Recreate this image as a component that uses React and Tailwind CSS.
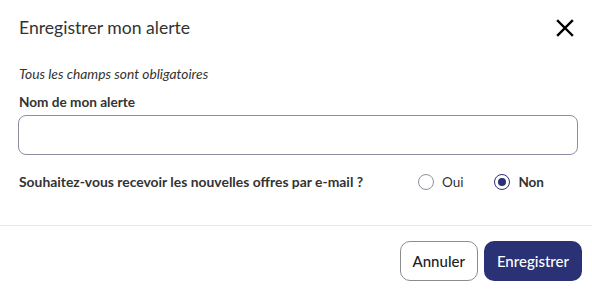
import React from 'react';

export default function App() {
  return (
    <div className="w-[592px] h-[292px] bg-white font-['Lato',sans-serif] text-[#333333] flex flex-col">
      {/* Header */}
      <div className="flex items-center justify-between pl-[19px] pr-[15px] pt-[7px] h-[49px]">
        <h2 className="text-[17.6px] leading-none">Enregistrer mon alerte</h2>
        <button className="w-[24px] h-[24px] flex items-center justify-center text-black">
          <svg width="18" height="18" viewBox="0 0 18 18" fill="none" stroke="currentColor" strokeWidth="2.4" strokeLinecap="square">
            <path d="M2 2 L16 16 M16 2 L2 16" />
          </svg>
        </button>
      </div>

      {/* Body */}
      <div className="pl-[18px] pr-[14px] flex flex-col">
        <p className="pl-px text-[13.8px] italic mt-[17px] leading-[16px]">Tous les champs sont obligatoires</p>
        <label className="pl-px text-[13.6px] font-bold mt-[12px] leading-[16px]">Nom de mon alerte</label>
        <input className="mt-[5px] h-[40px] w-full rounded-[8px] border border-[#8c8fa1] outline-none" />
        <div className="flex items-center mt-[19px] h-[16px]">
          <span className="pl-px text-[13.9px] font-bold flex-1">Souhaitez-vous recevoir les nouvelles offres par e-mail ?</span>
          <label className="flex items-center gap-[8px] text-[13.5px] mr-[31px]">
            <span className="w-[16px] h-[16px] rounded-full border border-[#8c8fa1]" />
            Oui
          </label>
          <label className="flex items-center gap-[8px] text-[13.5px] font-bold mr-[34px]">
            <span className="w-[16px] h-[16px] rounded-full border-[1.5px] border-[#2a3174] flex items-center justify-center">
              <span className="w-[8px] h-[8px] rounded-full bg-[#2a3174]" />
            </span>
            Non
          </label>
        </div>
      </div>

      <div className="mt-[35px] border-t border-[#e6e6e6]" />

      {/* Footer */}
      <div className="flex justify-end gap-[6px] pr-[10px] pt-[15px]">
        <button className="h-[40px] px-[12px] rounded-[10px] border border-[#8c8c8c] text-[15px] font-medium text-[#222]">Annuler</button>
        <button className="h-[40px] px-[13px] rounded-[10px] bg-[#2a3174] text-[15px] font-medium text-white">Enregistrer</button>
      </div>
    </div>
  );
}
